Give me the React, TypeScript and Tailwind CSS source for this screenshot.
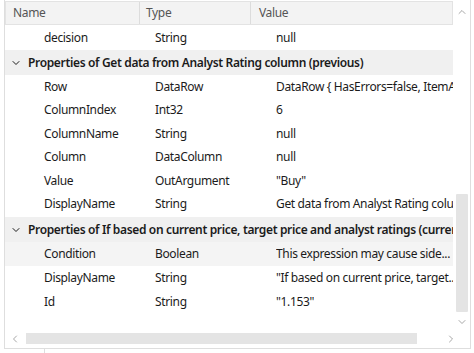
import { ChevronDown, ChevronUp, ChevronLeft, ChevronRight } from "lucide-react";

type Row = { name: string; type: string; value: string; hl?: boolean };
type Group = { title: string; rows: Row[] };

const groups: Group[] = [
  {
    title: "Properties of Get data from Analyst Rating column (previous)",
    rows: [
      { name: "Row", type: "DataRow", value: "DataRow { HasErrors=false, ItemArray=... }" },
      { name: "ColumnIndex", type: "Int32", value: "6" },
      { name: "ColumnName", type: "String", value: "null" },
      { name: "Column", type: "DataColumn", value: "null" },
      { name: "Value", type: "OutArgument", value: "\"Buy\"" },
      { name: "DisplayName", type: "String", value: "Get data from Analyst Rating column (previous)" },
    ],
  },
  {
    title: "Properties of If based on current price, target price and analyst ratings (current)",
    rows: [
      { name: "Condition", type: "Boolean", value: "This expression may cause side...", hl: true },
      { name: "DisplayName", type: "String", value: "\"If based on current price, target..." },
      { name: "Id", type: "String", value: "\"1.153\"" },
    ],
  },
];

function PropRow({ row, h }: { row: Row; h: string }) {
  return (
    <div className={`flex items-center whitespace-nowrap overflow-hidden ${h} ${row.hl ? "bg-[#f4f4f4]" : ""}`}>
      <div className="w-[150px] shrink-0 pl-[39px]">{row.name}</div>
      <div className="w-[121px] shrink-0">{row.type}</div>
      <div className="overflow-hidden">{row.value}</div>
    </div>
  );
}

export default function App() {
  return (
    <div
      className="w-[474px] h-[353px] overflow-hidden bg-white text-[12px] tracking-[-0.35px] text-[#1b1b1b]"
      style={{ fontFamily: '"Noto Sans", "Open Sans", sans-serif' }}
    >
      <div className="ml-[4px] w-[467px] h-[349px] border-l border-r border-b border-[#dedede] flex flex-col">
        <div className="flex h-[330px]">
          <div className="w-[448px] flex flex-col">
            {/* header */}
            <div className="mt-[1px] h-[24px] flex items-center bg-[#f3f3f3] border border-[#e3e3e3] text-[#555] whitespace-nowrap">
              <div className="w-[134px] pl-[7px] h-full flex items-center border-r border-[#dcdcdc]">Name</div>
              <div className="w-[111px] pl-[6px] h-full flex items-center border-r border-[#dcdcdc]">Type</div>
              <div className="pl-[8px]">Value</div>
            </div>
            <PropRow row={{ name: "decision", type: "String", value: "null" }} h="h-[25px]" />
            {groups.map((g, gi) => (
              <div key={g.title}>
                <div
                  className={`flex items-center bg-[#f0f0f0] font-semibold whitespace-nowrap overflow-hidden ${
                    gi === 0 ? "h-[25px]" : "h-[25px] mt-[1px]"
                  }`}
                >
                  <ChevronDown size={12} strokeWidth={2} className="ml-[5px] mr-[6px] shrink-0" />
                  <span>{g.title}</span>
                </div>
                {g.rows.map((r, i) => (
                  <PropRow key={r.name + i} row={r} h={gi === 0 ? "h-[23.5px]" : "h-[24px]"} />
                ))}
              </div>
            ))}
          </div>
          {/* vertical scrollbar */}
          <div className="w-[18px] flex flex-col items-center bg-white">
            <ChevronUp size={12} strokeWidth={1.5} className="mt-[6px] text-[#8a8a8a]" />
            <div className="flex-1 w-full flex flex-col justify-end pb-[4px]">
              <div className="mx-auto w-[12px] h-[118px] bg-[#e4e4e4] rounded-[1px]" />
            </div>
            <ChevronDown size={12} strokeWidth={1.5} className="mb-[2px] text-[#8a8a8a]" />
          </div>
        </div>
        {/* horizontal scrollbar */}
        <div className="flex items-center h-[16px] pt-[1px]">
          <ChevronLeft size={12} strokeWidth={1.5} className="ml-[4px] text-[#8a8a8a]" />
          <div className="ml-[5px] w-[391px] h-[11px] bg-[#e4e4e4]" />
          <ChevronRight size={12} strokeWidth={1.5} className="ml-[28px] text-[#8a8a8a]" />
        </div>
      </div>
      <div className="ml-[44px] w-[1px] h-[4px] bg-[#dedede]" />
    </div>
  );
}
